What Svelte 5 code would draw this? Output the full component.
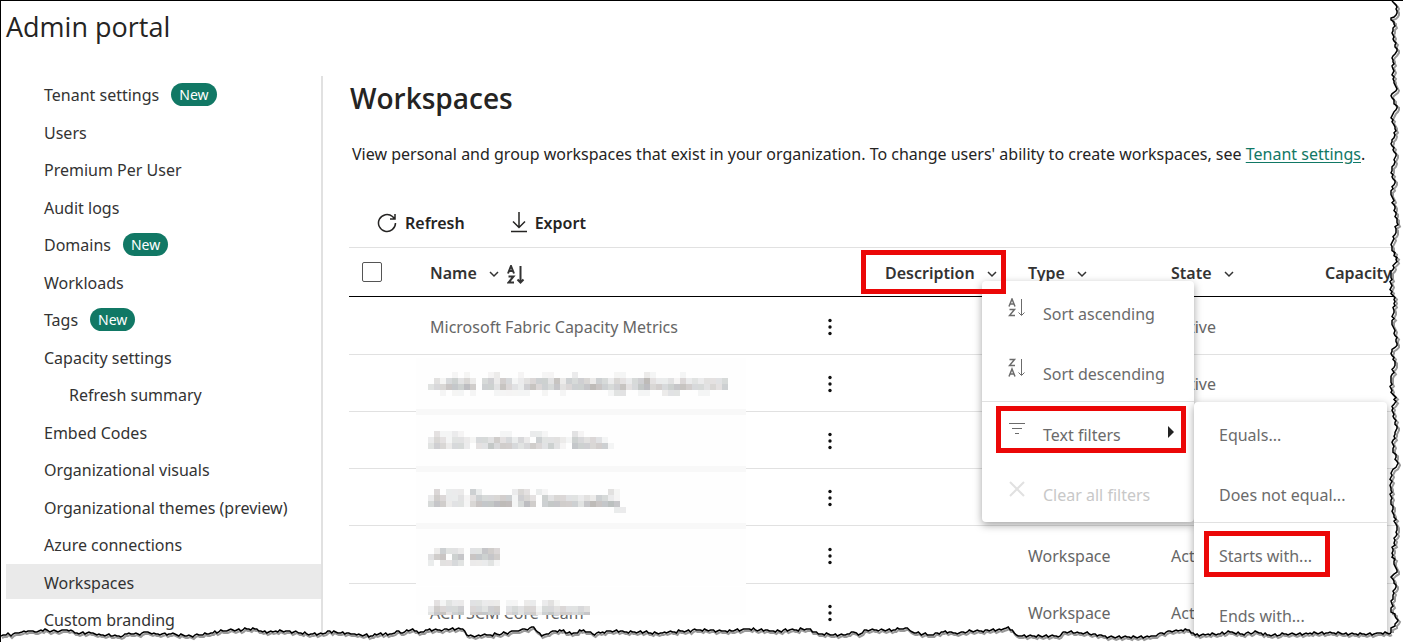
<script>
  const navItems = [
    { label: 'Tenant settings', isNew: true },
    { label: 'Users' },
    { label: 'Premium Per User' },
    { label: 'Audit logs' },
    { label: 'Domains', isNew: true },
    { label: 'Workloads' },
    { label: 'Tags', isNew: true },
    { label: 'Capacity settings' },
    { label: 'Refresh summary', nested: true },
    { label: 'Embed Codes' },
    { label: 'Organizational visuals' },
    { label: 'Organizational themes (preview)' },
    { label: 'Azure connections' },
    { label: 'Workspaces', current: true },
    { label: 'Custom branding' }
  ]

  // redacted names: one digit per 6px block, 0 is empty and 9 is darkest
  const rows = [
    { name: 'Microsoft Fabric Capacity Metrics', state: 'Active' },
    {
      state: 'Active',
      y: 14,
      band: true,
      mosaic: [
        '00001010001200010001100020000001100021000010000000',
        '03145342045254123455362545425424324573223142323334',
        '34466575055364325645463455676545634674545665443435',
        '00101101000111111001001000000013300110023300011000'
      ]
    },
    {
      y: 16,
      band: true,
      mosaic: [
        '0311210000001100022100003100000',
        '2431332144353424205333215434310',
        '3542442033645543454353106554551'
      ]
    },
    {
      y: 17,
      band: true,
      mosaic: [
        '0402220520000024302100000000003100',
        '2542231354445515430534433232542100',
        '4652331466677714750566555367667600',
        '0000000000000000000000000000000220'
      ]
    },
    {
      type: 'Workspace',
      state: 'Active',
      y: 19,
      mosaic: ['025332033654', '356056066565', '203343022231']
    },
    {
      name: 'ACH SCM Core Team',
      type: 'Workspace',
      state: 'Active',
      y: 13,
      mosaic: [
        '031322033222011022023100000',
        '254445044355034344144343343',
        '366356056656045355256455456'
      ]
    }
  ]

  const tints = ['#8b8580', '#858b92', '#8a8a90', '#918785', '#858f8c']

  // outline points of the torn paper edges
  const bottomPoints = [
    0, 18, 7, 15, 10, 18, 14, 15, 27, 13, 36, 14, 40, 12, 55, 13, 70, 12, 74, 15, 90, 15, 100, 17,
    122, 18, 128, 15, 137, 16, 145, 14, 155, 16, 170, 16, 190, 18, 210, 15, 228, 12, 256, 11, 262, 14,
    285, 13, 310, 16, 322, 16, 327, 13, 352, 16, 372, 18, 380, 15, 387, 17, 398, 13, 402, 15, 412, 11,
    418, 15, 425, 12, 462, 11, 468, 18, 490, 17, 505, 15, 520, 12, 533, 9, 541, 18, 550, 14, 559, 12,
    571, 16, 583, 12, 592, 16, 610, 13, 634, 14, 660, 15, 682, 13, 700, 12, 725, 13, 749, 11, 773, 13,
    808, 11, 818, 16, 845, 17, 851, 14, 860, 16, 866, 12, 893, 12, 905, 10, 912, 14, 929, 17, 941, 14,
    959, 15, 971, 13, 1001, 12, 1008, 9, 1016, 17, 1022, 18, 1060, 18, 1063, 14, 1085, 15, 1109, 19,
    1149, 19, 1158, 16, 1170, 13, 1189, 12, 1195, 17, 1218, 16, 1230, 14, 1242, 16, 1257, 14, 1269, 17,
    1290, 16, 1326, 15, 1362, 16, 1391, 15
  ]
  const rightPoints = [
    5, 0, 10, 6, 9, 14, 4, 17, 8, 25, 5, 32, 10, 50, 6, 55, 6, 78, 10, 88, 4, 95, 10, 107, 4, 117,
    9, 130, 4, 143, 9, 155, 4, 172, 8, 182, 4, 190, 10, 220, 9, 230, 5, 242, 5, 250, 10, 257, 4, 273,
    4, 293, 8, 297, 5, 322, 10, 343, 4, 353, 8, 361, 4, 380, 4, 392, 9, 397, 5, 410, 10, 428, 6, 440,
    6, 450, 11, 463, 4, 473, 4, 500, 7, 517, 10, 530, 5, 553, 10, 572, 4, 577, 9, 585, 6, 595, 4, 610,
    11, 620, 4, 630, 4, 633
  ]

  const wobble = [0, 1, -1, 0, 1, 0, -1, 1, 0, -1, 0]

  // adds small teeth between the outline points
  function tear(points, vertical) {
    let d = ''
    let n = 0
    for (let i = 0; i < points.length; i += 2) {
      const x = points[i]
      const y = points[i + 1]
      if (i > 0) {
        const px = points[i - 2]
        const py = points[i - 1]
        const steps = Math.floor(Math.max(Math.abs(x - px), Math.abs(y - py)) / 2)
        for (let s = 1; s < steps; s++) {
          const w = wobble[n++ % wobble.length]
          const mx = Math.round(px + ((x - px) * s) / steps) + (vertical ? w : 0)
          const my = Math.round(py + ((y - py) * s) / steps) + (vertical ? 0 : w)
          d += `L${mx} ${my}`
        }
      }
      d += `${i ? 'L' : 'M'}${x} ${y}`
    }
    return d
  }

  const bottomEdge = tear(bottomPoints, false)
  const rightEdge = tear(rightPoints, true)
</script>

{#snippet chevron()}
  <svg class="chevron" width="10" height="10" viewBox="0 0 10 10" aria-hidden="true">
    <path d="M1 3l4 4 4-4" />
  </svg>
{/snippet}

{#snippet sortIcon(flip)}
  <svg width="18" height="20" viewBox="0 0 18 20" aria-hidden="true">
    <path class="letter" d={flip ? 'M1 18.500l3-7.500 3 7.500M2 16h4' : 'M1 8.500l3-7.500 3 7.500M2 6h4'} />
    <path class="letter" d={flip ? 'M1.500 1.500h5l-5 6h5.500' : 'M1.500 11.500h5l-5 6h5.500'} />
    <path class="arrow" d="M13.500 1v16M10.500 14.500l3 3 3-3" />
  </svg>
{/snippet}

<div class="page">
  <header>
    <h1>Admin portal</h1>
  </header>

  <div class="columns">
    <nav>
      <ul>
        {#each navItems as item}
          <li>
            <a href="#top" class:nested={item.nested} class:current={item.current}>
              {item.label}
              {#if item.isNew}<span class="badge">New</span>{/if}
            </a>
          </li>
        {/each}
      </ul>
    </nav>

    <main>
      <h2>Workspaces</h2>
      <p>
        View personal and group workspaces that exist in your organization. To change users' ability
        to create workspaces, see <a href="#tenant">Tenant settings</a>.
      </p>

      <div class="toolbar">
        <button>
          <svg width="20" height="20" viewBox="0 0 20 20" aria-hidden="true">
            <path d="M18.500 10a8.500 8.500 0 1 1-3-6.500l2.500 2.500M18 1v5h-5" />
          </svg>
          Refresh
        </button>
        <button>
          <svg width="16" height="22" viewBox="0 0 16 22" aria-hidden="true">
            <path d="M8 0v15M2 9.500l6 6 6-6M0 19.500h16" />
          </svg>
          Export
        </button>
      </div>

      <table>
        <colgroup>
          <col class="col-check" />
          <col class="col-name" />
          <col class="col-more" />
          <col class="col-mid" />
          <col class="col-mid" />
          <col class="col-state" />
          <col />
        </colgroup>
        <thead>
          <tr>
            <th><input type="checkbox" aria-label="Select all" /></th>
            <th>
              <button>Name {@render chevron()}</button>
              <span class="sorted">{@render sortIcon(false)}</span>
            </th>
            <th></th>
            <th>
              <button>Description {@render chevron()}</button>
              <span class="callout on-header"></span>
              <ul class="menu">
                <li><button><span class="icon">{@render sortIcon(false)}</span>Sort ascending</button></li>
                <li><button><span class="icon">{@render sortIcon(true)}</span>Sort descending</button></li>
                <li class="divided">
                  <button>
                    <span class="icon">
                      <svg width="18" height="20" viewBox="0 0 18 20" aria-hidden="true">
                        <path d="M1 4.500h16M4 9.500h10M7 14.500h4" />
                      </svg>
                    </span>
                    Text filters
                    <svg class="more-arrow" width="6" height="12" viewBox="0 0 6 12" aria-hidden="true">
                      <path d="M0 0l6 6-6 6z" />
                    </svg>
                  </button>
                  <span class="callout on-filters"></span>
                  <ul class="menu submenu">
                    <li><button>Equals...</button></li>
                    <li><button>Does not equal...</button></li>
                    <li class="divided">
                      <button>Starts with...</button>
                      <span class="callout on-starts"></span>
                    </li>
                    <li><button>Ends with...</button></li>
                  </ul>
                </li>
                <li>
                  <button disabled>
                    <span class="icon">
                      <svg width="18" height="20" viewBox="0 0 18 20" aria-hidden="true">
                        <path class="cross" d="M2 3l14 14M16 3l-14 14" />
                      </svg>
                    </span>
                    Clear all filters
                  </button>
                </li>
              </ul>
            </th>
            <th><button>Type {@render chevron()}</button></th>
            <th><button>State {@render chevron()}</button></th>
            <th>Capacity</th>
          </tr>
        </thead>
        <tbody>
          {#each rows as row}
            <tr>
              <td></td>
              <td class="name">
                {row.name ?? ''}
                {#if row.mosaic}
                  <svg class="mosaic" width="330" height={row.name ? 28 : 57} aria-hidden="true">
                    <rect width="330" height="57" fill="#fefefe" />
                    {#if row.band}<rect y="51" width="330" height="6" fill="#f8f8f8" />{/if}
                    {#each row.mosaic as line, j}
                      {#each line as level, i}
                        {#if level !== '0'}
                          <rect
                            x={12 + i * 6}
                            y={row.y + j * 6}
                            width="6"
                            height="6"
                            fill={tints[(i * 3 + j * 2) % 5]}
                            opacity={level * 0.08} />
                        {/if}
                      {/each}
                    {/each}
                  </svg>
                {/if}
              </td>
              <td>
                <button class="more" aria-label="More options">
                  <svg width="6" height="18" viewBox="0 0 6 18" aria-hidden="true">
                    <circle cx="3" cy="2.500" r="1.700" />
                    <circle cx="3" cy="9" r="1.700" />
                    <circle cx="3" cy="15.500" r="1.700" />
                  </svg>
                </button>
              </td>
              <td></td>
              <td>{row.type ?? ''}</td>
              <td>{row.state ?? ''}</td>
              <td></td>
            </tr>
          {/each}
        </tbody>
      </table>
    </main>
  </div>

  <svg class="edge right" viewBox="0 0 16 642" preserveAspectRatio="none" aria-hidden="true">
    <path class="paper" d="{rightEdge}V642H16V0z" />
    <path class="shade" d={rightEdge} transform="translate(2 2)" />
    <path class="line" d={rightEdge} />
  </svg>
  <svg class="edge bottom" viewBox="0 0 1403 24" preserveAspectRatio="none" aria-hidden="true">
    <path class="paper" d="{bottomEdge}H1403V24H0z" />
    <path class="shade" d={bottomEdge} transform="translate(1 2)" />
    <path class="line" d={bottomEdge} />
  </svg>
</div>

<style>
  :global(body) {
    margin: 0;
    background: #fff;
  }

  .page {
    position: relative;
    box-sizing: border-box;
    height: 100vh;
    overflow: hidden;
    border-top: 1px solid #000;
    border-left: 1px solid #000;
    font-family: 'Noto Sans', 'Open Sans', sans-serif;
    font-size: 16px;
    line-height: 24px;
    color: #333;
  }

  h1 {
    margin: 0;
    padding: 6px 5px 29px;
    font-family: 'Open Sans', sans-serif;
    font-size: 27px;
    line-height: 40px;
    font-weight: 400;
    color: #252423;
  }

  ul {
    margin: 0;
    padding: 0;
    list-style: none;
  }

  button {
    padding: 0;
    border: 0;
    background: none;
    font: inherit;
    color: inherit;
    text-align: left;
    white-space: nowrap;
  }

  svg {
    flex: none;
    fill: none;
    stroke: currentColor;
  }

  .columns {
    display: flex;
  }

  nav {
    flex: none;
    box-sizing: border-box;
    width: 322px;
    padding-left: 5px;
    border-right: 2px solid #e1e1e1;
  }

  nav li {
    padding-bottom: 3px;
  }

  nav li:nth-child(even) {
    padding-bottom: 2px;
  }

  nav a {
    display: flex;
    align-items: center;
    gap: 12px;
    box-sizing: border-box;
    height: 35px;
    padding: 2px 0 0 38px;
    color: #333;
    text-decoration: none;
    white-space: nowrap;
  }

  nav a.nested {
    padding-left: 63px;
  }

  nav a.current {
    background: #eaeaea;
  }

  .badge {
    padding: 0 8px;
    border-radius: 12px;
    background: #117865;
    color: #fff;
    font-size: 14px;
    line-height: 23px;
  }

  main {
    flex: 1;
    min-width: 0;
    padding: 2px 0 0 27px;
  }

  h2 {
    margin: 0;
    font-family: 'Open Sans', sans-serif;
    font-size: 28px;
    line-height: 40px;
    font-weight: 600;
    color: #252423;
  }

  p {
    margin: 24px 0 45px;
    padding-left: 2px;
    color: #252423;
    white-space: nowrap;
  }

  p a {
    color: #117865;
    text-underline-offset: 2px;
  }

  .toolbar {
    display: flex;
    gap: 46px;
    padding: 0 0 12px 27px;
    color: #252423;
    font-weight: 600;
  }

  .toolbar button {
    display: flex;
    align-items: center;
    gap: 8px;
  }

  .toolbar svg {
    stroke-width: 1.500;
  }

  table {
    width: 100%;
    margin-left: -1px;
    table-layout: fixed;
    border-spacing: 0;
    border-top: 1px solid #e1e1e1;
  }

  .col-check {
    width: 81px;
  }

  .col-name {
    width: 392px;
  }

  .col-more {
    width: 63px;
  }

  .col-mid {
    width: 143px;
  }

  .col-state {
    width: 154px;
  }

  th,
  td {
    box-sizing: border-box;
    padding: 0;
    text-align: left;
    white-space: nowrap;
  }

  th {
    position: relative;
    height: 49px;
    border-bottom: 1px solid #000;
    font-weight: 600;
    padding-top: 2px;
  }

  td {
    height: 57px;
    padding-top: 2px;
    border-bottom: 1px solid #e1e1e1;
    color: #666;
  }

  tr:first-child td,
  tr:nth-child(5) td {
    height: 58px;
  }

  input {
    appearance: none;
    display: block;
    width: 20px;
    height: 20px;
    margin: 0 0 2px 13px;
    border: 1px solid #555;
    border-radius: 2px;
  }

  .chevron {
    margin-left: 8px;
    stroke-width: 1.500;
  }

  .letter {
    stroke-width: 1.500;
  }

  .sorted {
    display: inline-block;
    margin-left: 4px;
    vertical-align: middle;
    line-height: 0;
  }

  .sorted .letter,
  .sorted .arrow {
    stroke-width: 2;
  }

  .name {
    position: relative;
  }

  .mosaic {
    position: absolute;
    top: 3px;
    left: -14px;
    stroke: none;
  }

  .more {
    display: block;
    margin-left: 5px;
    line-height: 0;
  }

  .more svg {
    fill: #111;
    stroke: none;
  }

  .menu {
    position: absolute;
    z-index: 2;
    top: 33px;
    left: 97px;
    box-sizing: border-box;
    width: 212px;
    border-radius: 4px;
    background: #fff;
    box-shadow: 0 3px 8px rgba(0, 0, 0, 0.36);
    color: #6b6b6b;
    font-weight: 400;
  }

  .submenu {
    top: 0;
    left: 212px;
    width: 193px;
  }

  .menu li {
    position: relative;
  }

  .menu .divided {
    border-top: 1px solid #e1e1e1;
  }

  .menu button {
    display: flex;
    align-items: center;
    box-sizing: border-box;
    width: 100%;
    height: 60px;
    padding: 6px 20px 0 26px;
  }

  .submenu button {
    padding-left: 25px;
  }

  .menu button:disabled {
    color: #c8c8c8;
  }

  .menu .icon {
    width: 35px;
    height: 32px;
    line-height: 0;
  }

  .more-arrow {
    margin: 0 0 6px auto;
    fill: #222;
    stroke: none;
  }

  .cross {
    stroke: #e1e1e1;
    stroke-width: 2;
  }

  .callout {
    position: absolute;
    z-index: 3;
    box-sizing: border-box;
    border: 5px solid #eb0707;
    pointer-events: none;
  }

  .on-header {
    top: 2px;
    left: -24px;
    width: 145px;
    height: 44px;
  }

  .on-filters {
    top: 4px;
    left: 14px;
    width: 190px;
    height: 47px;
  }

  .on-starts {
    top: 8px;
    left: 10px;
    width: 126px;
    height: 46px;
  }

  .edge {
    position: absolute;
    z-index: 4;
    pointer-events: none;
  }

  .right {
    top: 0;
    right: 0;
    width: 16px;
    height: 100%;
  }

  .bottom {
    bottom: 0;
    left: 0;
    width: 100%;
    height: 24px;
  }

  .paper {
    fill: #fff;
    stroke: none;
  }

  .shade {
    stroke: rgba(0, 0, 0, 0.4);
    stroke-width: 2;
  }

  .line {
    stroke: #000;
    stroke-width: 1.500;
  }
</style>
